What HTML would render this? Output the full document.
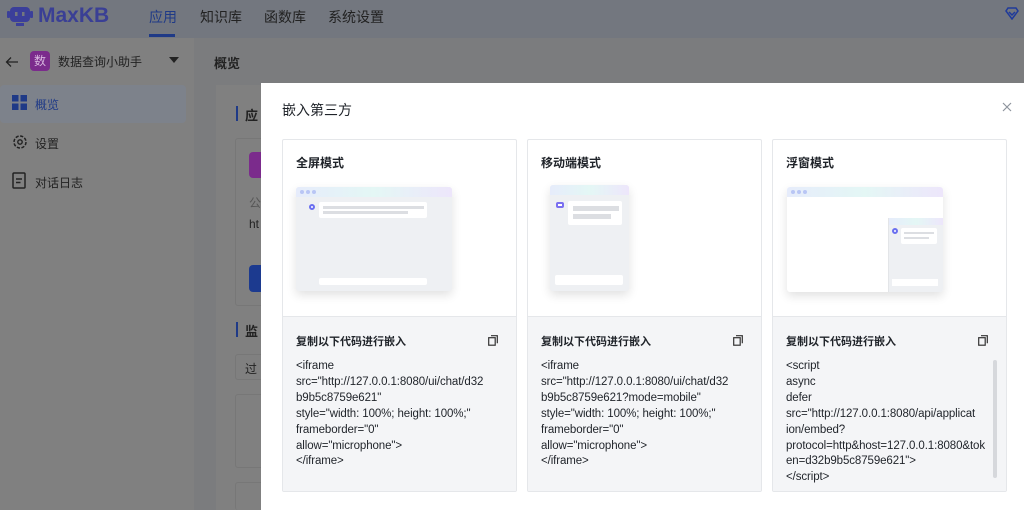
<!DOCTYPE html>
<html style="width:1024px;height:510px;overflow:hidden"><head><meta charset="utf-8"><style>
*{box-sizing:border-box;margin:0;padding:0}
body{width:1024px;height:510px;overflow:hidden;position:relative;font-family:"Liberation Sans","Noto Sans CJK SC",sans-serif;background:#7b7c7e;color:#1f2329}
.abs{position:absolute}
.hdr{left:0;top:0;width:1024px;height:38px;background:#73777f}
.side{left:0;top:38px;width:194px;height:472px;background:#808080}
.card{background:#808080;border:1px solid #777;border-radius:3px}
.modal{left:261px;top:83px;width:763px;height:427px;background:#fff}
.ec{position:absolute;top:56px;width:235px;height:353px;border:1px solid #e5e7ea;border-radius:2px;background:#fff;overflow:hidden}
.ec .t{position:absolute;left:13px;top:14px;font-size:12px;font-weight:bold;color:#1f2329}
.ec .bot{position:absolute;left:0;top:176px;width:100%;height:177px;background:#f4f5f7;border-top:1px solid #e5e7ea}
.ec .ct{position:absolute;left:13px;top:16px;font-size:11px;font-weight:bold}
.ec pre{position:absolute;left:13px;top:42px;font-family:"Liberation Sans",sans-serif;font-size:11.5px;line-height:15.9px;color:#1f2329;letter-spacing:-0.1px}
.cp{position:absolute;right:18px;top:18px;width:10px;height:11px}
.win{position:absolute;border-radius:3px;box-shadow:0 4px 10px rgba(0,0,0,.12);background:#eef0f3;overflow:hidden}
.bar{height:10px;background:linear-gradient(90deg,#e6ecfb,#e4f7f5,#ede6fb)}
.dots{position:absolute;left:4px;top:3px;font-size:0}
.dots i{display:inline-block;width:4px;height:4px;border-radius:50%;background:#b9c6f5;margin-right:2px}
.ln{position:absolute;background:#dcdee2;height:3px}
</style></head><body>
<div class="abs hdr">
 <svg class="abs" style="left:7px;top:5px" width="26" height="22" viewBox="0 0 26 22"><rect x="3" y="2" width="20" height="15" rx="4" fill="#3b3f9a"/><rect x="0" y="6" width="3" height="7" rx="1" fill="#3b3f9a"/><rect x="23" y="6" width="3" height="7" rx="1" fill="#3b3f9a"/><rect x="8" y="7" width="2.5" height="4" fill="#73777f"/><rect x="15" y="7" width="2.5" height="4" fill="#73777f"/><rect x="9" y="18" width="8" height="3" fill="#3b3f9a"/></svg>
 <div class="abs" style="left:38px;top:4px;font-size:21px;font-weight:bold;color:#3a3f95">MaxKB</div>
 <div class="abs" style="left:149px;top:7px;font-size:14px;color:#1f3a87">应用</div>
 <div class="abs" style="left:149px;top:34px;width:26px;height:3px;background:#1f3a87"></div>
 <div class="abs" style="left:200px;top:7px;font-size:14px;color:#222">知识库</div>
 <div class="abs" style="left:264px;top:7px;font-size:14px;color:#222">函数库</div>
 <div class="abs" style="left:328px;top:7px;font-size:14px;color:#222">系统设置</div>
 <svg class="abs" style="left:1005px;top:7px" width="14" height="13" viewBox="0 0 14 13"><path d="M3 1h8l2 3-6 8-6-8z M4 5l3 3 3-3" fill="none" stroke="#1f3a9a" stroke-width="1.5"/></svg>
</div>
<div class="abs side">
 <svg class="abs" style="left:5px;top:18px" width="14" height="12" viewBox="0 0 14 12"><path d="M13 6H2M6 1.5L1.5 6 6 10.5" fill="none" stroke="#222" stroke-width="1.3"/></svg>
 <div class="abs" style="left:30px;top:13px;width:20px;height:20px;border-radius:4px;background:#7b2b8c;color:#d9b8e0;font-size:12px;text-align:center;line-height:20px">数</div>
 <div class="abs" style="left:58px;top:15px;font-size:12px;color:#222">数据查询小助手</div>
 <div class="abs" style="left:169px;top:19px;width:0;height:0;border:5px solid transparent;border-top:6px solid #222"></div>
 <div class="abs" style="left:0;top:47px;width:186px;height:38px;background:#7d828b;border-radius:4px"></div>
 <svg class="abs" style="left:12px;top:57px" width="15" height="15"><rect x="0" y="0" width="6.5" height="6.5" fill="#1f3a87"/><rect x="8.5" y="0" width="6.5" height="6.5" fill="#1f3a87"/><rect x="0" y="8.5" width="6.5" height="6.5" fill="#1f3a87"/><rect x="8.5" y="8.5" width="6.5" height="6.5" fill="#1f3a87"/></svg>
 <div class="abs" style="left:35px;top:58px;font-size:12px;color:#1f3a87">概览</div>
 <svg class="abs" style="left:12px;top:96px" width="16" height="16" viewBox="0 0 16 16"><circle cx="8" cy="8" r="6" fill="none" stroke="#222" stroke-width="1.5" stroke-dasharray="3.2 1.5"/><circle cx="8" cy="8" r="2.2" fill="none" stroke="#222" stroke-width="1.4"/></svg>
 <div class="abs" style="left:35px;top:97px;font-size:12px;color:#222">设置</div>
 <svg class="abs" style="left:12px;top:134px" width="14" height="17"><rect x="1" y="1" width="12" height="15" rx="1" fill="none" stroke="#222" stroke-width="1.5"/><path d="M4 7h6M4 10.5h4.5" stroke="#222" stroke-width="1.4"/></svg>
 <div class="abs" style="left:35px;top:136px;font-size:12px;color:#222">对话日志</div>
</div>
<div class="abs" style="left:214px;top:53px;font-size:13px;font-weight:bold;color:#222">概览</div>
<div class="abs" style="left:216px;top:85px;width:50px;height:425px;background:#808080"></div>
<div class="abs" style="left:236px;top:106px;width:2px;height:15px;background:#1f3a87"></div>
<div class="abs" style="left:245px;top:105px;font-size:13px;font-weight:bold;color:#222">应</div>
<div class="abs card" style="left:235px;top:138px;width:40px;height:168px"></div>
<div class="abs" style="left:249px;top:152px;width:14px;height:26px;background:#7b2b8c;border-radius:4px 0 0 4px"></div>
<div class="abs" style="left:249px;top:194px;font-size:12px;color:#555">公</div>
<div class="abs" style="left:249px;top:217px;font-size:12px;color:#222">ht</div>
<div class="abs" style="left:249px;top:265px;width:14px;height:27px;background:#1c3a8f;border-radius:4px 0 0 4px"></div>
<div class="abs" style="left:236px;top:322px;width:2px;height:15px;background:#1f3a87"></div>
<div class="abs" style="left:245px;top:321px;font-size:13px;font-weight:bold;color:#222">监</div>
<div class="abs card" style="left:235px;top:354px;width:40px;height:26px"></div>
<div class="abs" style="left:245px;top:360px;font-size:12px;color:#222">过</div>
<div class="abs card" style="left:235px;top:394px;width:40px;height:74px"></div>
<div class="abs card" style="left:235px;top:482px;width:40px;height:28px;border-bottom:none"></div>

<div class="abs modal">
 <div class="abs" style="left:21px;top:17px;font-size:14px;color:#1f2329">嵌入第三方</div>
 <svg class="abs" style="left:741px;top:19px" width="10" height="10"><path d="M1 1l8 8M9 1l-8 8" stroke="#8f959e" stroke-width="1.2"/></svg>

 <div class="ec" style="left:21px">
  <div class="t">全屏模式</div>
  <div class="win" style="left:13px;top:47px;width:156px;height:104px">
   <div class="bar"></div><div class="dots"><i></i><i></i><i></i></div>
   <div class="abs" style="left:13px;top:17px;width:6px;height:6px;border-radius:50%;border:2px solid #6a6ff0;background:#fff"></div>
   <div class="abs" style="left:23px;top:15px;width:108px;height:16px;background:#fff;border-radius:2px"></div>
   <div class="ln" style="left:27px;top:19px;width:101px"></div><div class="ln" style="left:27px;top:24px;width:85px"></div>
   <div class="abs" style="left:23px;top:91px;width:108px;height:7px;background:#fff;border-radius:2px"></div>
  </div>
  <div class="bot"><div class="ct">复制以下代码进行嵌入</div>
   <svg class="cp" viewBox="0 0 10 11"><rect x="0.7" y="2.7" width="6.5" height="7.5" fill="none" stroke="#333" stroke-width="1.2"/><path d="M3 0.7h6.3v7.5" fill="none" stroke="#333" stroke-width="1.2"/></svg>
<pre>&lt;iframe
src="http://127.0.0.1:8080/ui/chat/d32
b9b5c8759e621"
style="width: 100%; height: 100%;"
frameborder="0"
allow="microphone"&gt;
&lt;/iframe&gt;</pre></div>
 </div>

 <div class="ec" style="left:266px">
  <div class="t">移动端模式</div>
  <div class="win" style="left:22px;top:45px;width:79px;height:106px">
   <div class="bar"></div>
   <div class="abs" style="left:6px;top:17px;width:8px;height:6px;border-radius:2px;border:2px solid #7a6ff0;background:#fff"></div>
   <div class="abs" style="left:18px;top:16px;width:54px;height:24px;background:#fff;border-radius:2px"></div>
   <div class="ln" style="left:23px;top:21px;width:46px;height:5px"></div><div class="ln" style="left:23px;top:29px;width:38px;height:5px"></div>
   <div class="abs" style="left:5px;top:90px;width:68px;height:10px;background:#fff;border-radius:2px"></div>
  </div>
  <div class="bot"><div class="ct">复制以下代码进行嵌入</div>
   <svg class="cp" viewBox="0 0 10 11"><rect x="0.7" y="2.7" width="6.5" height="7.5" fill="none" stroke="#333" stroke-width="1.2"/><path d="M3 0.7h6.3v7.5" fill="none" stroke="#333" stroke-width="1.2"/></svg>
<pre>&lt;iframe
src="http://127.0.0.1:8080/ui/chat/d32
b9b5c8759e621?mode=mobile"
style="width: 100%; height: 100%;"
frameborder="0"
allow="microphone"&gt;
&lt;/iframe&gt;</pre></div>
 </div>

 <div class="ec" style="left:511px">
  <div class="t">浮窗模式</div>
  <div class="win" style="left:14px;top:47px;width:156px;height:105px;background:#fff">
   <div class="bar"></div><div class="dots"><i></i><i></i><i></i></div>
   <div class="abs" style="left:101px;top:31px;width:55px;height:74px;background:#eef0f3;border-left:1px solid #e3e5e8">
    <div class="bar" style="height:7px"></div>
    <div class="abs" style="left:3px;top:10px;width:6px;height:6px;border-radius:50%;border:2px solid #6a6ff0;background:#fff"></div>
    <div class="abs" style="left:12px;top:10px;width:36px;height:16px;background:#fff;border-radius:2px"></div>
    <div class="ln" style="left:15px;top:14px;width:30px;height:2px"></div><div class="ln" style="left:15px;top:19px;width:25px;height:2px"></div>
    <div class="abs" style="left:3px;top:61px;width:46px;height:7px;background:#fff"></div>
   </div>
  </div>
  <div class="bot"><div class="ct">复制以下代码进行嵌入</div>
   <svg class="cp" viewBox="0 0 10 11"><rect x="0.7" y="2.7" width="6.5" height="7.5" fill="none" stroke="#333" stroke-width="1.2"/><path d="M3 0.7h6.3v7.5" fill="none" stroke="#333" stroke-width="1.2"/></svg>
   <div class="abs" style="left:220px;top:43px;width:4px;height:118px;background:#d6d8dc;border-radius:2px"></div>
<pre>&lt;script
async
defer
src="http://127.0.0.1:8080/api/applicat
ion/embed?
protocol=http&amp;host=127.0.0.1:8080&amp;tok
en=d32b9b5c8759e621"&gt;
&lt;/script&gt;</pre></div>
 </div>
</div>
</body></html>
